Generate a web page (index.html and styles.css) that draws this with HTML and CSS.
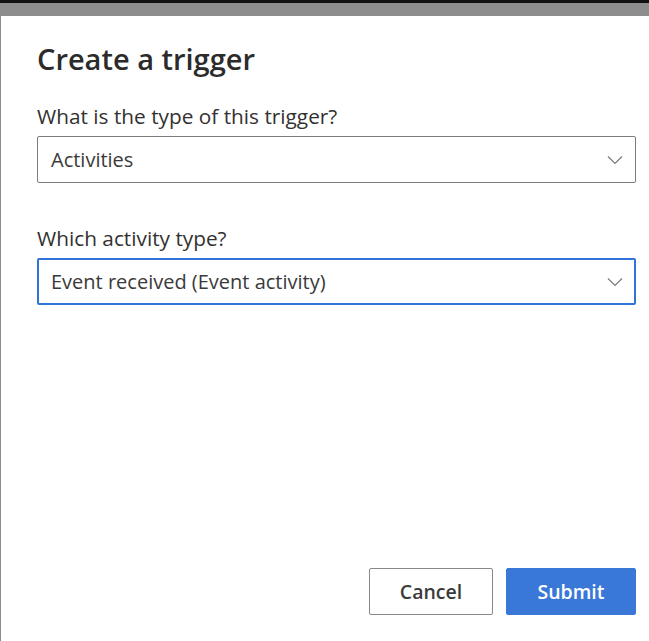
FILE: index.html
```
<!DOCTYPE html>
<html lang="en">
<head>
    <meta charset="UTF-8">
    <title>Create a trigger</title>
    <link rel="stylesheet" href="styles.css">
</head>
<body>
    <div class="dialog">
        <h1 class="title">Create a trigger</h1>

        <div class="field">
            <label class="field-label">What is the type of this trigger?</label>
            <div class="dropdown">
                <span>Activities</span>
                <svg class="chevron" width="16" height="10" viewBox="0 0 16 10">
                    <path d="M1 1.5 L8 8.5 L15 1.5" fill="none" stroke="#7a7a7a" stroke-width="1.2"/>
                </svg>
            </div>
        </div>

        <div class="field">
            <label class="field-label">Which activity type?</label>
            <div class="dropdown focused">
                <span>Event received (Event activity)</span>
                <svg class="chevron" width="16" height="10" viewBox="0 0 16 10">
                    <path d="M1 1.5 L8 8.5 L15 1.5" fill="none" stroke="#7a7a7a" stroke-width="1.2"/>
                </svg>
            </div>
        </div>

        <div class="actions">
            <button class="btn btn-cancel">Cancel</button>
            <button class="btn btn-submit">Submit</button>
        </div>
    </div>
</body>
</html>
```

FILE: styles.css
```
html, body {
    height: 100%;
}
body {
    margin: 0;
    font-family: "Open Sans", "Noto Sans", sans-serif;
    background-color: #8d8d8d;
    border-top: 3px solid #111;
    box-sizing: border-box;
    display: flex;
    flex-direction: column;
}
.dialog {
    flex: 1;
    margin-top: 13px;
    margin-left: 1px;
    background-color: #fff;
    padding: 0 13px 26px 36px;
    display: flex;
    flex-direction: column;
    color: #323130;
}
.title {
    margin: 23px 0 0 0;
    font-size: 29px;
    font-weight: 600;
    line-height: 40px;
    color: #2b2b2b;
}
.field {
    display: flex;
    flex-direction: column;
}
.field:nth-of-type(1) {
    margin-top: 24px;
}
.field + .field {
    margin-top: 42px;
}
.field-label {
    font-size: 20.8px;
    line-height: 26px;
    color: #323130;
    margin-bottom: 7px;
}
.dropdown {
    height: 47px;
    box-sizing: border-box;
    border: 1px solid #7c7c7c;
    border-radius: 2px;
    display: flex;
    align-items: center;
    justify-content: space-between;
    padding: 0 12px 0 13px;
    font-size: 20px;
    color: #3a3a3a;
}
.dropdown.focused {
    border: 2px solid #2f74d6;
    padding: 0 11px 0 12px;
}
.chevron {
    display: block;
}
.actions {
    margin-top: auto;
    display: flex;
    justify-content: flex-end;
    gap: 13px;
}
.btn {
    height: 47px;
    border-radius: 2px;
    font-family: inherit;
    font-size: 19.5px;
    font-weight: 600;
    cursor: pointer;
}
.btn-cancel {
    width: 124px;
    background-color: #fff;
    border: 1px solid #8a8886;
    color: #3b3b3b;
}
.btn-submit {
    width: 130px;
    background-color: #3a78d8;
    border: 1px solid #3a78d8;
    color: #fff;
}
```
